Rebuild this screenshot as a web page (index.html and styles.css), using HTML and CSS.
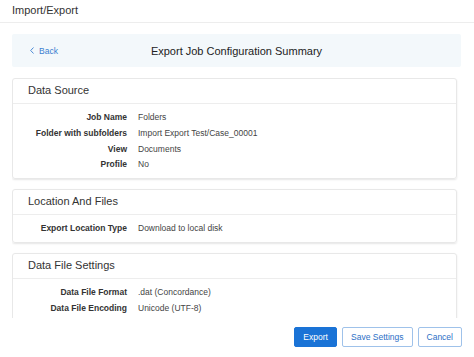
FILE: index.html
```html
<!DOCTYPE html>
<html>
<head>
<meta charset="utf-8">
<link rel="stylesheet" href="styles.css">
</head>
<body>
<div class="topbar">Import/Export</div>
<div class="content">
  <div class="band">
    <a class="back"><svg class="chev" width="4" height="7" viewBox="0 0 4 7"><path d="M3.5 0.5 L0.7 3.5 L3.5 6.5" fill="none" stroke="#3a7fd0" stroke-width="0.9"/></svg>Back</a>
    <div class="band-title">Export Job Configuration Summary</div>
  </div>
  <div class="scroll">
    <div class="card">
      <div class="card-head">Data Source</div>
      <div class="card-body">
        <div class="lbl">Job Name</div><div class="val">Folders</div>
        <div class="lbl">Folder with subfolders</div><div class="val">Import Export Test/Case_00001</div>
        <div class="lbl">View</div><div class="val">Documents</div>
        <div class="lbl">Profile</div><div class="val">No</div>
      </div>
    </div>
    <div class="card">
      <div class="card-head">Location And Files</div>
      <div class="card-body">
        <div class="lbl">Export Location Type</div><div class="val">Download to local disk</div>
      </div>
    </div>
    <div class="card">
      <div class="card-head">Data File Settings</div>
      <div class="card-body">
        <div class="lbl">Data File Format</div><div class="val">.dat (Concordance)</div>
        <div class="lbl">Data File Encoding</div><div class="val">Unicode (UTF-8)</div>
      </div>
    </div>
  </div>
  <div class="footer">
    <button class="btn primary">Export</button>
    <button class="btn">Save Settings</button>
    <button class="btn">Cancel</button>
  </div>
</div>
</body>
</html>
```
FILE: styles.css
```css
* { box-sizing: border-box; }
html, body { margin: 0; padding: 0; background: #fff; }
body {
  font-family: "Liberation Sans", Arial, sans-serif;
  color: #333;
  width: 474px;
  height: 357px;
  overflow: hidden;
}
.topbar {
  height: 23px;
  border-bottom: 1px solid #ededed;
  padding-left: 12px;
  font-size: 11px;
  line-height: 21px;
  color: #333;
}
.content {
  padding: 11px 13px 0 12px;
}
.band {
  height: 33px;
  background: #f3f8fb;
  border-radius: 2px;
  display: flex;
  align-items: center;
  position: relative;
  justify-content: center;
}
.back {
  position: absolute;
  left: 18px;
  top: 0;
  height: 33px;
  display: flex;
  align-items: center;
  gap: 5px;
  font-size: 8.5px;
  color: #3a7fd0;
}
.chev { display: block; margin-top: -1px; }
.band-title {
  font-size: 11px;
  color: #222;
}
.scroll {
  margin-top: 11px;
  height: 240px;
  overflow: hidden;
  padding-right: 4px;
  display: flex;
  flex-direction: column;
  gap: 10px;
}
.card {
  border: 1px solid #e8e8e8;
  border-radius: 3px;
  box-shadow: 0 1px 2px rgba(0,0,0,0.10);
  flex-shrink: 0;
}
.card-head {
  height: 25px;
  border-bottom: 1px solid #ededed;
  padding-left: 15px;
  font-size: 11px;
  line-height: 23px;
  color: #333;
}
.card-body {
  display: grid;
  grid-template-columns: 114px 1fr;
  column-gap: 11px;
  padding: 6px 0 5px;
  font-size: 8.5px;
  line-height: 15.8px;
}
.lbl {
  text-align: right;
  font-weight: bold;
  color: #333;
}
.val { color: #444; }
.footer {
  margin-top: 9px;
  display: flex;
  justify-content: flex-end;
  gap: 5px;
  margin-right: -1px;
}
.btn {
  height: 20px;
  font-family: "Liberation Sans", Arial, sans-serif;
  font-size: 8.5px;
  padding: 0 8px;
  border: 1px solid #9fc2ea;
  background: #fff;
  color: #2c6fc6;
  border-radius: 2px;
}
.btn.primary {
  background: #1a73d6;
  border-color: #1a73d6;
  color: #fff;
  width: 43px;
}
```
